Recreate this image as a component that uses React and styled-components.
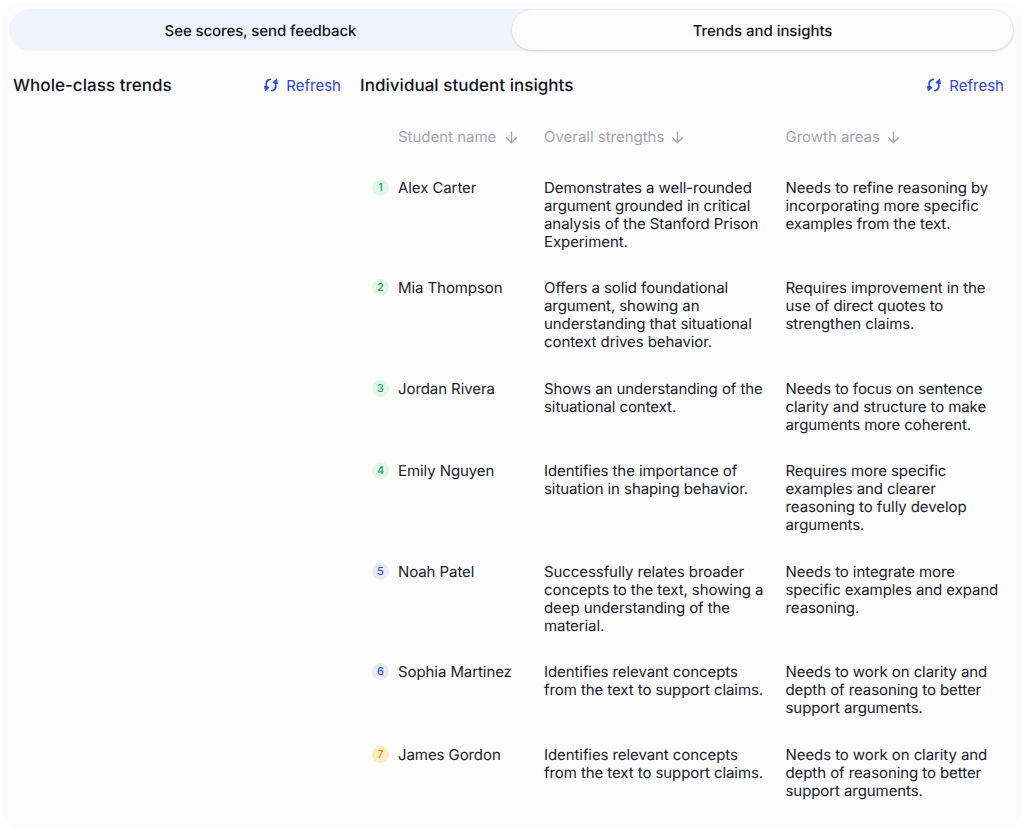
import React from "react";
import styled, { createGlobalStyle } from "styled-components";

const Global = createGlobalStyle`
  html, body { margin: 0; padding: 0; background: #fff; }
  body {
    font-family: Inter, "Liberation Sans", sans-serif;
    color: #14151f;
    text-rendering: geometricPrecision;
  }
`;

const Card = styled.div`
  box-sizing: border-box;
  width: 1020px;
  height: 826px;
  margin: 2px;
  padding: 7px 8px 0 7px;
  background: #fcfcfd;
  border-radius: 20px;
`;

const Tabs = styled.div`
  display: grid;
  grid-template-columns: 503px 1fr;
  height: 42px;
  padding: 1px 1px 1px 0;
  box-sizing: border-box;
  background: #f0f4fd;
  border-radius: 21px;
`;

const Tab = styled.div`
  display: flex;
  align-items: center;
  justify-content: center;
  font-size: 15px;
  font-weight: ${(p) => (p.$active ? 500 : 450)};
  letter-spacing: ${(p) => (p.$active ? "-0.04px" : "-0.1px")};
  color: #14151f;
  border-radius: 20px;
  background: ${(p) => (p.$active ? "#fcfcfd" : "transparent")};
  box-shadow: ${(p) => (p.$active ? "0 1px 3px rgba(40, 50, 110, 0.18)" : "none")};
`;

const Columns = styled.div`
  display: grid;
  grid-template-columns: 328px 644px;
  column-gap: 19px;
  padding: 0 0 0 4px;
`;

const Panel = styled.section`
  min-width: 0;
`;

const PanelHead = styled.div`
  display: flex;
  align-items: center;
  justify-content: space-between;
  height: 22px;
  margin-top: 23px;
`;

const Title = styled.h2`
  margin: 1px 0 0;
  font-size: 17px;
  font-weight: 500;
  letter-spacing: 0.03px;
  line-height: 22px;
  color: #14151f;
`;

const Refresh = styled.button`
  display: flex;
  align-items: center;
  gap: 8px;
  padding: 0;
  border: 0;
  background: none;
  font: inherit;
  font-size: 15px;
  font-weight: 400;
  color: #2f4ad9;
`;

const Grid = styled.div`
  margin-top: 32px;
  padding-left: 12px;
`;

const Row = styled.div`
  display: grid;
  grid-template-columns: 26px 146px 241.5px 1fr;
  padding-bottom: ${(p) => (p.$head ? "32.9px" : "28.5px")};
  font-size: 15px;
  line-height: 18px;
`;

const HeadCell = styled.div`
  grid-column: ${(p) => p.$col};
  display: flex;
  align-items: center;
  gap: ${(p) => p.$gap || 7}px;
  letter-spacing: -0.02px;
  color: #a3a5ae;
`;

const Badge = styled.div`
  width: 17px;
  height: 17px;
  border-radius: 50%;
  display: flex;
  align-items: center;
  justify-content: center;
  font-size: 11px;
  font-weight: 500;
  line-height: 1;
  background: ${(p) => p.$bg};
  color: ${(p) => p.$fg};
`;

const Cell = styled.div`
  color: #20212c;
  letter-spacing: -0.08px;
  padding-right: ${(p) => p.$pr || 0}px;
`;

const ArrowIcon = () => (
  <svg width="13" height="13" viewBox="0 0 13 13" fill="none" stroke="#a3a5ae" strokeWidth="1.3" strokeLinecap="round" strokeLinejoin="round">
    <path d="M6.5 1.2V11.6M1.6 6.8l4.9 4.9 4.9-4.9" />
  </svg>
);

const RefreshIcon = () => (
  <svg width="14" height="14" viewBox="0 0 14 14" fill="none" stroke="#2f4ad9" strokeWidth="1.6" strokeLinecap="round" strokeLinejoin="round">
    <path d="M6.2 1.4C3.6 1.9 1.9 4 2.1 6.5c.1.9.3 1.6.8 2.4" />
    <path d="M.9 8.4 5.2 9.4 1.6 12.7Z" fill="#2f4ad9" strokeWidth="1" />
    <path d="M7.8 12.6c2.6-.5 4.3-2.6 4.1-5.1-.1-.9-.3-1.6-.8-2.4" />
    <path d="M13.1 5.6 8.8 4.6 12.4 1.3Z" fill="#2f4ad9" strokeWidth="1" />
  </svg>
);

const GREEN = { $bg: "#dff8e7", $fg: "#23a55f" };
const BLUE = { $bg: "#e9ebf6", $fg: "#3450dc" };
const AMBER = { $bg: "#fdeebc", $fg: "#e8862e" };

const students = [
  { name: "Alex Carter", tone: GREEN, strengths: "Demonstrates a well-rounded argument grounded in critical analysis of the Stanford Prison Experiment.", growth: "Needs to refine reasoning by incorporating more specific examples from the text." },
  { name: "Mia Thompson", tone: GREEN, strengths: "Offers a solid foundational argument, showing an understanding that situational context drives behavior.", growth: "Requires improvement in the use of direct quotes to strengthen claims." },
  { name: "Jordan Rivera", tone: GREEN, strengths: "Shows an understanding of the situational context.", growth: "Needs to focus on sentence clarity and structure to make arguments more coherent." },
  { name: "Emily Nguyen", tone: GREEN, strengths: "Identifies the importance of situation in shaping behavior.", growth: "Requires more specific examples and clearer reasoning to fully develop arguments." },
  { name: "Noah Patel", tone: BLUE, strengths: "Successfully relates broader concepts to the text, showing a deep understanding of the material.", growth: "Needs to integrate more specific examples and expand reasoning." },
  { name: "Sophia Martinez", tone: BLUE, strengths: "Identifies relevant concepts from the text to support claims.", growth: "Needs to work on clarity and depth of reasoning to better support arguments." },
  { name: "James Gordon", tone: AMBER, strengths: "Identifies relevant concepts from the text to support claims.", growth: "Needs to work on clarity and depth of reasoning to better support arguments." },
];

export default function App() {
  return (
    <>
      <Global />
      <Card>
        <Tabs>
          <Tab>See scores, send feedback</Tab>
          <Tab $active>Trends and insights</Tab>
        </Tabs>
        <Columns>
          <Panel>
            <PanelHead>
              <Title>Whole-class trends</Title>
              <Refresh><RefreshIcon />Refresh</Refresh>
            </PanelHead>
          </Panel>
          <Panel>
            <PanelHead>
              <Title>Individual student insights</Title>
              <Refresh><RefreshIcon />Refresh</Refresh>
            </PanelHead>
            <Grid>
              <Row $head>
                <HeadCell $col={2} $gap={8.5}>Student name <ArrowIcon /></HeadCell>
                <HeadCell $col={3}>Overall strengths <ArrowIcon /></HeadCell>
                <HeadCell $col={4}>Growth areas <ArrowIcon /></HeadCell>
              </Row>
              {students.map((s, i) => (
                <Row key={s.name}>
                  <Badge {...s.tone}>{i + 1}</Badge>
                  <Cell>{s.name}</Cell>
                  <Cell $pr={14}>{s.strengths}</Cell>
                  <Cell>{s.growth}</Cell>
                </Row>
              ))}
            </Grid>
          </Panel>
        </Columns>
      </Card>
    </>
  );
}
